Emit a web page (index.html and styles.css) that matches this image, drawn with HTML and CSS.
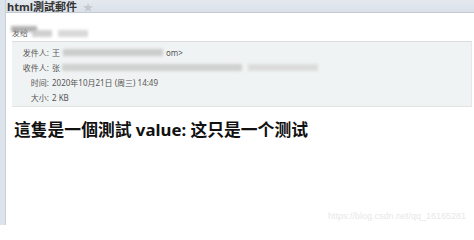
FILE: index.html
```html
<!DOCTYPE html>
<html lang="zh">
<head>
<meta charset="utf-8">
<link rel="stylesheet" href="styles.css">
</head>
<body>
<div class="frame">
  <div class="side"></div>
  <div class="main">
    <div class="topbar">
      <span class="title">html測試郵件</span>
      <span class="star">★</span>
    </div>
    <div class="content">
      <div class="sender-line"><span class="blur b-name"></span></div>
      <div class="to-line">发给 <span class="blur b-to1"></span><span class="blur b-to2"></span></div>
      <div class="info">
        <div class="row"><span class="label">发件人:</span><span class="val">王<span class="blur b-from"></span>om&gt;</span></div>
        <div class="row"><span class="label">收件人:</span><span class="val">张<span class="blur b-rcpt1"></span><span class="blur b-rcpt2"></span></span></div>
        <div class="row"><span class="label">时间:</span><span class="val">2020年10月21日 (周三) 14:49</span></div>
        <div class="row"><span class="label">大小:</span><span class="val">2 KB</span></div>
      </div>
      <div class="body-text">這隻是一個測試 value: 这只是一个测试</div>
    </div>
  </div>
</div>
<div class="watermark">https://blog.csdn.net/qq_16165281</div>
</body>
</html>
```

FILE: styles.css
```css
html, body {
  margin: 0;
  padding: 0;
  background: #ffffff;
}
body {
  width: 474px;
  height: 225px;
  overflow: hidden;
  position: relative;
  font-family: "Noto Sans", "Noto Sans CJK SC", sans-serif;
  color: #333;
}
.frame {
  display: flex;
  height: 225px;
}
.side {
  width: 5px;
  flex: none;
  background: #dce3eb;
  border-right: 1px solid #c9d0d8;
}
.main {
  flex: 1;
  display: flex;
  flex-direction: column;
}
.topbar {
  height: 12px;
  flex: none;
  background: linear-gradient(#e4e9ef, #dae1e9);
  border-bottom: 1px solid #c5cad0;
  overflow: hidden;
  display: flex;
  align-items: flex-end;
  gap: 6px;
  padding-left: 1px;
}
.title {
  font-weight: bold;
  font-size: 11px;
  line-height: 14px;
  margin-bottom: -2px;
  color: #333;
  white-space: nowrap;
}
.star {
  font-size: 10px;
  line-height: 12px;
  margin-bottom: -1px;
  color: #c4c8cc;
}
.content {
  display: flex;
  flex-direction: column;
  padding-right: 2px;
}
.blur {
  display: inline-block;
  height: 7px;
  vertical-align: middle;
  background: #b5b5b5;
  filter: blur(1.6px);
  opacity: 0.8;
}
.sender-line {
  height: 10px;
  margin-top: 3px;
  padding-left: 5px;
}
.b-name { width: 26px; height: 6px; background: #9e9e9e; }
.to-line {
  font-size: 8px;
  line-height: 12px;
  color: #555;
  padding-left: 6px;
  margin-top: 1px;
}
.b-to1 { width: 20px; margin-left: 2px; background: #c4c4c4; }
.b-to2 { width: 30px; margin-left: 6px; background: #cfcfcf; }
.info {
  margin-top: 2px;
  margin-left: 6px;
  background: #f0f3f3;
  border-top: 1px solid #dcdede;
  border-bottom: 1px solid #e2e4e4;
  border-right: 1px solid #e6e8e8;
  padding: 3px 0 1px;
  display: flex;
  flex-direction: column;
}
.row {
  display: flex;
  height: 15px;
  align-items: center;
  font-size: 8px;
  color: #555;
  white-space: nowrap;
}
.label {
  width: 37px;
  text-align: right;
  flex: none;
}
.val {
  margin-left: 3px;
  display: flex;
  align-items: center;
}
.b-from { width: 100px; margin: 0 3px; background: #c2c2c2; }
.b-rcpt1 { width: 180px; margin-left: 2px; background: #c8c8c8; }
.b-rcpt2 { width: 70px; margin-left: 6px; background: #d6d6d6; }
.body-text {
  margin-top: 13px;
  padding-left: 8px;
  font-size: 16.8px;
  line-height: 20px;
  font-weight: bold;
  color: #111;
  white-space: nowrap;
}
.watermark {
  position: absolute;
  right: 8px;
  bottom: 3px;
  font-size: 9px;
  line-height: 12px;
  color: #e8e8e8;
  font-family: "Liberation Sans", sans-serif;
}
```
